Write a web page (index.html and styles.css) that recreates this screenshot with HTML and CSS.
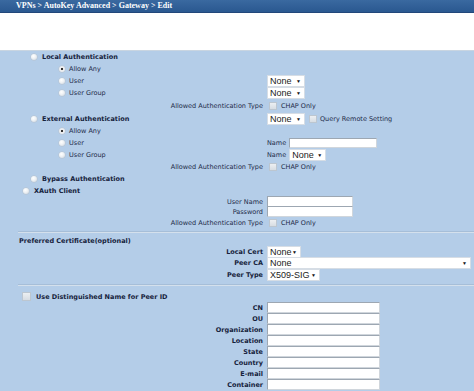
FILE: index.html
```html
<!DOCTYPE html>
<html>
<head>
<meta charset="utf-8">
<link rel="stylesheet" href="styles.css">
</head>
<body>
<header class="crumb">VPNs &gt; AutoKey Advanced &gt; Gateway &gt; Edit</header>
<div class="blank"></div>
<main class="panel">
  <div class="row h12"><div class="opt l1"><span class="radio"></span><b>Local Authentication</b></div><div></div></div>
  <div class="row h12"><div class="opt l2"><span class="radio on"></span>Allow Any</div><div></div></div>
  <div class="row h12"><div class="opt l2"><span class="radio"></span>User</div><div class="ctl"><span class="sel w37"><span>None</span><i>&#9660;</i></span></div></div>
  <div class="row h12"><div class="opt l2"><span class="radio"></span>User Group</div><div class="ctl"><span class="sel w37"><span>None</span><i>&#9660;</i></span></div></div>
  <div class="row h13"><div class="lab">Allowed Authentication Type</div><div class="ctl"><span class="chk"></span>CHAP Only</div></div>
  <div class="row h13"><div class="opt l1"><span class="radio"></span><b>External Authentication</b></div><div class="ctl"><span class="sel w37"><span>None</span><i>&#9660;</i></span><span class="chk q"></span>Query Remote Setting</div></div>
  <div class="row h12"><div class="opt l2"><span class="radio on"></span>Allow Any</div><div></div></div>
  <div class="row h12"><div class="opt l2"><span class="radio"></span>User</div><div class="ctl"><span class="nm">Name</span><span class="inp w87"></span></div></div>
  <div class="row h12"><div class="opt l2"><span class="radio"></span>User Group</div><div class="ctl"><span class="nm">Name</span><span class="sel w36"><span>None</span><i>&#9660;</i></span></div></div>
  <div class="row h12"><div class="lab">Allowed Authentication Type</div><div class="ctl"><span class="chk"></span>CHAP Only</div></div>
  <div class="row h12"><div class="opt l1"><span class="radio"></span><b>Bypass Authentication</b></div><div></div></div>
  <div class="row h11"><div class="opt l0"><span class="radio"></span><b>XAuth Client</b></div><div></div></div>
  <div class="row h10"><div class="lab">User Name</div><div class="ctl"><span class="inp w85"></span></div></div>
  <div class="row h11"><div class="lab">Password</div><div class="ctl"><span class="inp w85"></span></div></div>
  <div class="row h11"><div class="lab">Allowed Authentication Type</div><div class="ctl"><span class="chk"></span>CHAP Only</div></div>

  <section class="group cert">
    <div class="row h10"><div class="title"><b>Preferred Certificate(optional)</b></div><div></div></div>
    <div class="row h11"><div class="lab"><b>Local Cert</b></div><div class="ctl"><span class="sel w33"><span>None</span><i>&#9660;</i></span></div></div>
    <div class="row h12"><div class="lab"><b>Peer CA</b></div><div class="ctl"><span class="sel wide"><span>None</span><i>&#9660;</i></span></div></div>
    <div class="row h12"><div class="lab"><b>Peer Type</b></div><div class="ctl"><span class="sel w52"><span>X509-SIG</span><i>&#9660;</i></span></div></div>
  </section>

  <section class="group dn">
    <div class="row h11"><div class="title dnt"><span class="chk big"></span><b>Use Distinguished Name for Peer ID</b></div><div></div></div>
    <div class="row h11"><div class="lab"><b>CN</b></div><div class="ctl"><span class="inp w112"></span></div></div>
    <div class="row h11"><div class="lab"><b>OU</b></div><div class="ctl"><span class="inp w112"></span></div></div>
    <div class="row h11"><div class="lab"><b>Organization</b></div><div class="ctl"><span class="inp w112"></span></div></div>
    <div class="row h11"><div class="lab"><b>Location</b></div><div class="ctl"><span class="inp w112"></span></div></div>
    <div class="row h11"><div class="lab"><b>State</b></div><div class="ctl"><span class="inp w112"></span></div></div>
    <div class="row h11"><div class="lab"><b>Country</b></div><div class="ctl"><span class="inp w112"></span></div></div>
    <div class="row h11"><div class="lab"><b>E-mail</b></div><div class="ctl"><span class="inp w112"></span></div></div>
    <div class="row h11"><div class="lab"><b>Container</b></div><div class="ctl"><span class="inp w112"></span></div></div>
  </section>
</main>
</body>
</html>
```
FILE: styles.css
```css
html, body {
  margin: 0;
  padding: 0;
  background: #b4cde8;
}
body {
  width: 474px;
  height: 391px;
  overflow: hidden;
  font-family: "DejaVu Sans", Verdana, sans-serif;
  font-size: 6.5px;
  color: #1d2b48;
}
.crumb {
  height: 13px;
  box-sizing: border-box;
  padding-left: 16px;
  background: linear-gradient(#3a69a0, #2a5890);
  color: #fff;
  font-family: "Liberation Serif", "Times New Roman", serif;
  font-weight: bold;
  font-size: 8px;
  line-height: 11px;
  border-bottom: 1px solid #22477a;
  box-shadow: 0 1px 0 #9fb0c2, 0 2px 0 #d4dbe3;
}
.blank {
  height: 37px;
  background: #fff;
  border-bottom: 1px solid #c9d5e1;
}
.panel {
  background: #b4cde8;
  padding-bottom: 10px;
}
.row {
  display: grid;
  grid-template-columns: 263px 1fr;
  column-gap: 4px;
  align-items: center;
}
.h10 { height: 10px; }
.h11 { height: 11px; }
.h12 { height: 12px; }
.h13 { height: 13px; }
.opt {
  display: flex;
  align-items: center;
  white-space: nowrap;
}
.l0 { padding-left: 23px; }
.l1 { padding-left: 31px; }
.l2 { padding-left: 59px; }
.l0 .radio, .l1 .radio { margin-right: 5px; }
.l2 .radio { margin-right: 4px; }
b { font-weight: bold; color: #16223c; }
.radio {
  display: inline-block;
  width: 6px;
  height: 6px;
  border-radius: 50%;
  background: radial-gradient(circle at 40% 35%, #ffffff 0%, #eef1f4 45%, #c9d0d8 100%);
  box-shadow: 0 0 0 0.5px #b8c2cc;
}
.radio.on {
  background: radial-gradient(circle, #2a2a2a 0, #3a3a3a 1.2px, #f4f5f7 1.6px, #d3d9e0 100%);
}
.lab {
  text-align: right;
  white-space: nowrap;
}
.ctl {
  display: flex;
  align-items: center;
  white-space: nowrap;
}
.chk {
  display: inline-block;
  width: 6px;
  height: 6px;
  margin: 0 4px 0 2px;
  background: linear-gradient(#eceff2, #d7dde3);
  border: 0.5px solid #bcc6d0;
}
.chk.q { margin-left: 4px; margin-right: 3px; }
.chk.big { width: 7px; height: 7px; margin: 0 5px 0 0; }
.sel {
  display: inline-flex;
  align-items: center;
  justify-content: space-between;
  box-sizing: border-box;
  height: 12px;
  padding: 0 3px 0 2px;
  background: #fff;
  border: 1px solid #d6dde5;
  font-family: "Liberation Sans", Arial, sans-serif;
  font-size: 9px;
  color: #222;
}
.sel i {
  font-style: normal;
  font-size: 5px;
  color: #111;
}
.w33 { width: 34px; }
.w36 { width: 37px; }
.w37 { width: 38px; }
.w52 { width: 53px; }
.wide { width: 204px; }
.inp {
  display: inline-block;
  box-sizing: border-box;
  height: 11px;
  background: #fff;
  border: 1px solid #9da7b2;
  border-right-color: #d0d6dc;
  border-bottom-color: #d0d6dc;
}
.w85 { width: 86px; }
.w87 { width: 88px; height: 10px; }
.w112 { width: 113px; }
.nm { margin-right: 3px; }
.group {
  margin-left: 18px;
  border-top: 1px solid #d4e0ec;
  box-shadow: 0 -1px 0 #a6bed8;
}
.group .row { grid-template-columns: 245px 1fr; }
.cert {
  margin-top: 4px;
  padding-top: 3px;
}
.dn {
  margin-top: 4px;
  padding-top: 5px;
}
.title {
  padding-left: 1px;
  white-space: nowrap;
}
.dnt {
  display: flex;
  align-items: center;
  padding-left: 4px;
}
```
